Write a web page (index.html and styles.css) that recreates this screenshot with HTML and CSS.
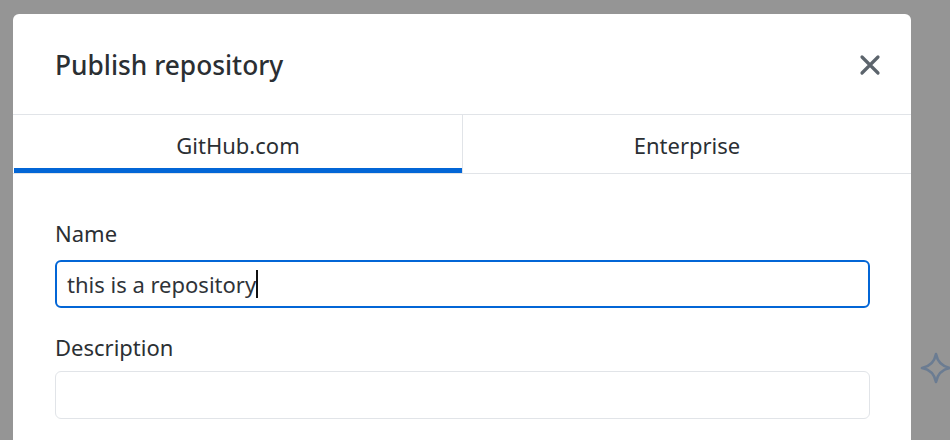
FILE: index.html
```html
<!DOCTYPE html>
<html>
<head>
<meta charset="utf-8">
<link rel="stylesheet" href="styles.css">
</head>
<body>
<div class="dialog">
  <div class="header">
    <h1 class="title">Publish repository</h1>
    <svg class="close" width="22" height="22" viewBox="0 0 22 22"><path d="M3 3 L19 19 M19 3 L3 19" stroke="#5c646c" stroke-width="3.2" stroke-linecap="round"/></svg>
  </div>
  <div class="tabs">
    <div class="tab selected">GitHub.com</div>
    <div class="tab">Enterprise</div>
  </div>
  <div class="form">
    <label class="label">Name</label>
    <div class="input focused"><span>this is a repository</span><span class="caret"></span></div>
    <label class="label desc">Description</label>
    <div class="input"></div>
  </div>
</div>
<svg class="sparkle" width="34" height="34" viewBox="0 0 34 34"><path d="M17 3 C18.5 11 23 15.5 31 17 C23 18.5 18.5 23 17 31 C15.5 23 11 18.5 3 17 C11 15.5 15.5 11 17 3 Z" fill="none" stroke="#6b7c92" stroke-width="2.6" stroke-linejoin="round"/></svg>
</body>
</html>
```
FILE: styles.css
```css
html, body { margin: 0; padding: 0; }
body {
  background: #959595;
  width: 950px;
  height: 440px;
  overflow: hidden;
  position: relative;
  font-family: "Noto Sans", "Open Sans", sans-serif;
  color: #2b2f33;
}
.dialog {
  margin: 14px 0 0 13px;
  width: 898px;
  height: 440px;
  background: #fff;
  border-radius: 6px 6px 0 0;
}
.header {
  display: flex;
  align-items: center;
  justify-content: space-between;
  padding: 0 30px 0 42px;
  box-sizing: border-box;
  height: 101px;
  border-bottom: 1px solid #e1e4e8;
}
.title {
  margin: 0;
  font-size: 26.3px;
  font-weight: 500;
  color: #2b2f33;
  margin-top: 2px;
}
.close { display: block; margin-top: 2px; }
.tabs {
  display: flex;
  height: 58px;
  border-bottom: 1px solid #e1e4e8;
}
.tab {
  flex: 1;
  display: flex;
  align-items: center;
  justify-content: center;
  font-size: 22px;
  color: #2b2f33;
  box-sizing: border-box;
  padding-top: 2px;
}
.tab + .tab { border-left: 1.5px solid #e1e4e8; }
.tab.selected {
  border-bottom: 5px solid #0366d6;
  padding-top: 7px;
  margin-left: 1px;
}
.form {
  padding: 44px 41px 0 42px;
  display: flex;
  flex-direction: column;
}
.label {
  font-size: 22px;
  line-height: 30px;
  color: #2b2f33;
  margin-bottom: 12px;
}
.label.desc { margin-top: 24px; margin-bottom: 9px; }
.input {
  height: 48px;
  border: 1px solid #e1e4e8;
  border-radius: 6px;
  box-sizing: border-box;
  display: flex;
  align-items: center;
  padding-left: 11px;
  font-size: 22px;
  color: #2f3338;
}
.input.focused {
  border: 2px solid #0366d6;
  padding-left: 10px;
}
.caret {
  display: inline-block;
  width: 2px;
  height: 28px;
  background: #111;
  margin-left: 0;
}
.sparkle {
  position: absolute;
  left: 919px;
  top: 351px;
}
```
